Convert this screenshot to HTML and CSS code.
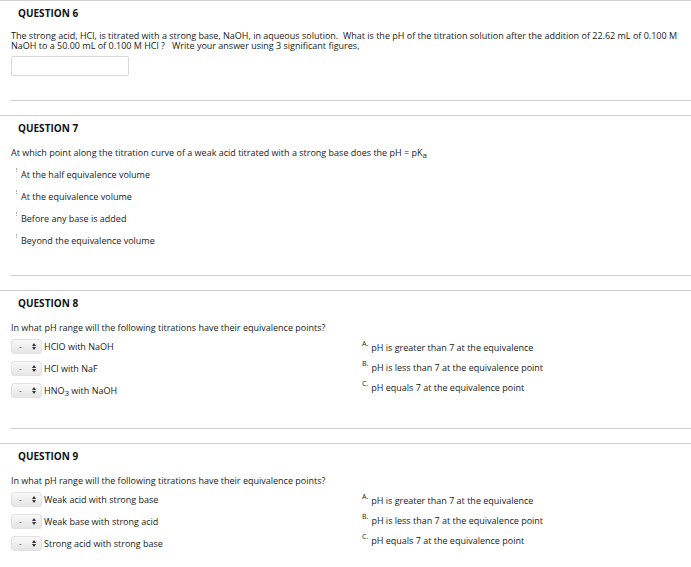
FILE: index.html
```html
<!DOCTYPE html>
<html>
<head>
<meta charset="utf-8">
<link rel="stylesheet" href="styles.css">
</head>
<body>
<div class="q">
  <div class="q-title">QUESTION 6</div>
  <div class="q-body q6">
    <p class="q-text">The strong acid, HCl, is titrated with a strong base, NaOH, in aqueous solution.&nbsp; What is the pH of the titration solution after the addition of 22.62 mL of 0.100 M<br>NaOH to a 50.00 mL of 0.100 M HCl ? &nbsp; Write your answer using 3 significant figures,</p>
    <input class="answer-input" type="text">
  </div>
</div>

<div class="q">
  <div class="q-title">QUESTION 7</div>
  <div class="q-body q7">
    <p class="q-text">At which point along the titration curve of a weak acid titrated with a strong base does the pH = pK<sub>a</sub></p>
    <div class="options">
      <div class="opt"><span class="radio"></span><span>At the half equivalence volume</span></div>
      <div class="opt"><span class="radio"></span><span>At the equivalence volume</span></div>
      <div class="opt"><span class="radio"></span><span>Before any base is added</span></div>
      <div class="opt"><span class="radio"></span><span>Beyond the equivalence volume</span></div>
    </div>
  </div>
</div>

<div class="q">
  <div class="q-title">QUESTION 8</div>
  <div class="q-body q8">
    <p class="q-text">In what pH range will the following titrations have their equivalence points?</p>
    <div class="match">
      <div class="match-left">
        <div class="mrow"><span class="sel"><span class="sel-dash">-</span><svg class="sel-arrows" width="4" height="7" viewBox="0 0 4 7"><path d="M2 0 L4 3 L0 3 Z M0 4 L4 4 L2 7 Z" fill="#333"/></svg></span><span>HClO with NaOH</span></div>
        <div class="mrow"><span class="sel"><span class="sel-dash">-</span><svg class="sel-arrows" width="4" height="7" viewBox="0 0 4 7"><path d="M2 0 L4 3 L0 3 Z M0 4 L4 4 L2 7 Z" fill="#333"/></svg></span><span>HCl with NaF</span></div>
        <div class="mrow"><span class="sel"><span class="sel-dash">-</span><svg class="sel-arrows" width="4" height="7" viewBox="0 0 4 7"><path d="M2 0 L4 3 L0 3 Z M0 4 L4 4 L2 7 Z" fill="#333"/></svg></span><span>HNO<sub>3</sub> with NaOH</span></div>
      </div>
      <div class="match-right">
        <div class="arow"><span class="ans-letter">A.</span><span>pH is greater than 7 at the equivalence</span></div>
        <div class="arow"><span class="ans-letter">B.</span><span>pH is less than 7 at the equivalence point</span></div>
        <div class="arow"><span class="ans-letter">C.</span><span>pH equals 7 at the equivalence point</span></div>
      </div>
    </div>
  </div>
</div>

<div class="q">
  <div class="q-title">QUESTION 9</div>
  <div class="q-body q9">
    <p class="q-text">In what pH range will the following titrations have their equivalence points?</p>
    <div class="match">
      <div class="match-left">
        <div class="mrow"><span class="sel"><span class="sel-dash">-</span><svg class="sel-arrows" width="4" height="7" viewBox="0 0 4 7"><path d="M2 0 L4 3 L0 3 Z M0 4 L4 4 L2 7 Z" fill="#333"/></svg></span><span>Weak acid with strong base</span></div>
        <div class="mrow"><span class="sel"><span class="sel-dash">-</span><svg class="sel-arrows" width="4" height="7" viewBox="0 0 4 7"><path d="M2 0 L4 3 L0 3 Z M0 4 L4 4 L2 7 Z" fill="#333"/></svg></span><span>Weak base with strong acid</span></div>
        <div class="mrow"><span class="sel"><span class="sel-dash">-</span><svg class="sel-arrows" width="4" height="7" viewBox="0 0 4 7"><path d="M2 0 L4 3 L0 3 Z M0 4 L4 4 L2 7 Z" fill="#333"/></svg></span><span>Strong acid with strong base</span></div>
      </div>
      <div class="match-right">
        <div class="arow"><span class="ans-letter">A.</span><span>pH is greater than 7 at the equivalence</span></div>
        <div class="arow"><span class="ans-letter">B.</span><span>pH is less than 7 at the equivalence point</span></div>
        <div class="arow"><span class="ans-letter">C.</span><span>pH equals 7 at the equivalence point</span></div>
      </div>
    </div>
  </div>
</div>
</body>
</html>
```
FILE: styles.css
```css
body {
  margin: 0;
  font-family: "Open Sans", "DejaVu Sans", sans-serif;
  color: #1a1a1a;
  background: #fff;
}

.q {
  border-top: 1px solid #cfcfcf;
  padding-top: 6px;
}

.q-title {
  margin-left: 18px;
  font-size: 10px;
  line-height: 12px;
  font-weight: 700;
  color: #111;
}

.q-body {
  margin: 0 0 14px 11px;
  border-bottom: 1px solid #cfcfcf;
}

.q-text {
  margin: 14px 0 0;
  font-size: 9px;
  line-height: 10px;
}

.q-text sub, .mrow sub {
  font-size: 8px;
  vertical-align: -2px;
  line-height: 0;
}

.q6 { padding-bottom: 24px; }
.q6 .q-text { margin-top: 12px; line-height: 10px; }

.answer-input {
  display: block;
  margin: 5px 0 0;
  width: 118px;
  height: 20px;
  box-sizing: border-box;
  border: 1px solid #d8d8d8;
  border-radius: 2px;
  padding: 0;
  background: #fff;
}

.q7 { padding-bottom: 24px; }

.options { margin-top: 5px; }

.opt {
  height: 22px;
  display: flex;
  align-items: center;
  font-size: 9px;
  padding-left: 5px;
}

.radio {
  display: inline-block;
  width: 0;
  height: 4px;
  border-left: 1px dotted #aaa;
  margin-right: 4px;
  align-self: flex-start;
  margin-top: 5px;
}

.q8 { padding-bottom: 27px; }
.q9 { padding-bottom: 10px; border-bottom-color: transparent; }

.match {
  display: grid;
  grid-template-columns: 351px auto;
  margin-top: 2px;
}

.mrow {
  height: 22px;
  display: flex;
  align-items: center;
  font-size: 9px;
}

.sel {
  display: inline-flex;
  align-items: center;
  flex: none;
  width: 31px;
  height: 15px;
  box-sizing: border-box;
  border-radius: 4px;
  background: linear-gradient(#fafafa, #e4e4e4);
  box-shadow: inset 0 0 0 1px #e2e2e2;
  margin-right: 2px;
  padding-left: 8px;
}

.sel-dash {
  font-size: 8px;
  color: #333;
  line-height: 1;
}

.sel-arrows {
  margin-left: auto;
  margin-right: 6px;
}

.match-right { padding-top: 2px; }

.arow {
  height: 20px;
  display: flex;
  align-items: center;
  font-size: 9px;
}

.ans-letter {
  font-size: 7px;
  margin-right: 3px;
  position: relative;
  top: -4px;
}
```
